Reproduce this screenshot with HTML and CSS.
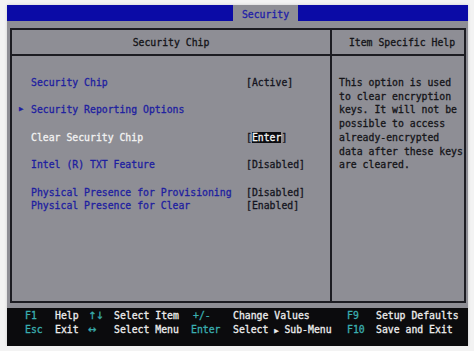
FILE: index.html
```html
<!DOCTYPE html>
<html lang="en">
<head>
    <meta charset="UTF-8">
    <meta name="viewport" content="width=device-width, initial-scale=1.0">
    <title>BIOS Setup - Security</title>
    <link rel="stylesheet" href="styles.css">
</head>
<body>
    <div class="screen">
        <!-- Menu bar -->
        <div class="menubar">
            <span class="tab">Security</span>
        </div>

        <!-- Main panel -->
        <div class="panel">
            <div class="panel-head">
                <div class="head-left">Security Chip</div>
                <div class="head-right">Item Specific Help</div>
            </div>
            <div class="panel-body">
                <div class="items">
                    <div class="row gap">
                        <span class="mark"></span>
                        <span class="label">Security Chip</span>
                        <span class="value">[Active]</span>
                    </div>
                    <div class="row gap">
                        <span class="mark">&#9654;</span>
                        <span class="label">Security Reporting Options</span>
                    </div>
                    <div class="row gap selected">
                        <span class="mark"></span>
                        <span class="label">Clear Security Chip</span>
                        <span class="value">[<span class="hl">Enter</span>]</span>
                    </div>
                    <div class="row gap">
                        <span class="mark"></span>
                        <span class="label">Intel (R) TXT Feature</span>
                        <span class="value">[Disabled]</span>
                    </div>
                    <div class="row">
                        <span class="mark"></span>
                        <span class="label">Physical Presence for Provisioning</span>
                        <span class="value">[Disabled]</span>
                    </div>
                    <div class="row">
                        <span class="mark"></span>
                        <span class="label">Physical Presence for Clear</span>
                        <span class="value">[Enabled]</span>
                    </div>
                </div>
                <div class="help">
                    This option is used<br>
                    to clear encryption<br>
                    keys. It will not be<br>
                    possible to access<br>
                    already-encrypted<br>
                    data after these keys<br>
                    are cleared.
                </div>
            </div>
        </div>

        <!-- Key legend -->
        <div class="legend">
            <span class="key">F1</span><span class="desc">Help</span>
            <span class="key arrows">&#8593;&#8595;</span><span class="desc">Select Item</span>
            <span class="key pm">+/-</span><span class="desc">Change Values</span>
            <span class="key">F9</span><span class="desc">Setup Defaults</span>

            <span class="key">Esc</span><span class="desc">Exit</span>
            <span class="key arrows">&#8596;</span><span class="desc">Select Menu</span>
            <span class="key">Enter</span><span class="desc">Select <span class="tri">&#9654;</span> Sub-Menu</span>
            <span class="key">F10</span><span class="desc">Save and Exit</span>
        </div>
    </div>
</body>
</html>
```

FILE: styles.css
```css
/* General Styles */
body {
    margin: 0;
    padding: 0;
    background-color: #f3f3f3;
    font-family: "DejaVu Sans Mono", "Liberation Mono", monospace;
    font-size: 9.8px;
    line-height: 13.7px;
    -webkit-text-stroke: 0.3px currentColor;
}

.screen {
    width: 461px;
    height: 341px;
    margin: 5px 0 0 7px;
    background-color: #8e8e95;
    display: flex;
    flex-direction: column;
    box-shadow: 0 0 3px rgba(0, 0, 0, 0.15);
}

/* Menu bar */
.menubar {
    height: 16px;
    background-color: #0b0ba6;
    padding-left: 226px;
    display: flex;
}

.tab {
    width: 65px;
    height: 16px;
    line-height: 19px;
    text-align: center;
    background-color: #8e8e95;
    color: #1e1ea8;
}

/* Main panel */
.panel {
    margin: 7px 2px 0 3px;
    height: 271px;
    border: 2px solid #1c1c22;
    display: flex;
    flex-direction: column;
}

.panel-head {
    display: flex;
    height: 24px;
    border-bottom: 2px solid #1c1c22;
    color: #141418;
}

.head-left {
    width: 318px;
    border-right: 2px solid #1c1c22;
    text-align: center;
    line-height: 25px;
}

.head-right {
    flex: 1;
    text-align: center;
    line-height: 25px;
    padding-left: 8px;
}

.panel-body {
    flex: 1;
    display: flex;
}

.items {
    width: 318px;
    border-right: 2px solid #1c1c22;
    padding-top: 20px;
}

.row {
    display: flex;
    height: 13.7px;
    color: #1e1ea0;
}

.row.gap {
    margin-bottom: 13.7px;
}

.mark {
    width: 19px;
    padding-left: 7px;
    box-sizing: border-box;
    font-size: 7px;
}

.label {
    width: 215px;
    white-space: nowrap;
}

.value {
    color: #141420;
    white-space: nowrap;
}

.selected .label {
    color: #f2f2f2;
}

.hl {
    background-color: #0c0c10;
    color: #f4f4f4;
}

.help {
    flex: 1;
    padding: 20px 0 0 7px;
    color: #141418;
}

/* Key legend */
.legend {
    margin-top: 5px;
    flex: 1;
    background-color: #0b0b0d;
    padding: 1px 0 0 18px;
    display: grid;
    grid-template-columns: 30px 33px 26px 77px 42px 114px 29px 1fr;
    grid-auto-rows: 13.7px;
    color: #ededed;
    white-space: nowrap;
}

.key {
    color: #3aaeb0;
}

.key.arrows {
    font-family: "DejaVu Sans", sans-serif;
    font-size: 10px;
    letter-spacing: -1px;
}

.key.pm {
    padding-left: 2px;
}

.tri {
    font-size: 7px;
}
```
